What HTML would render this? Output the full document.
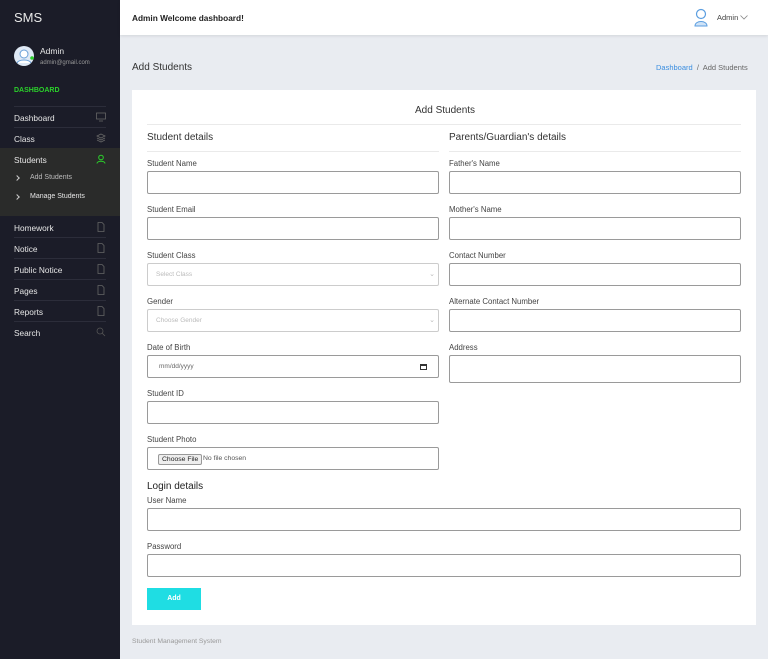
<!DOCTYPE html>
<html><head><meta charset="utf-8"><style>
*{margin:0;padding:0;box-sizing:border-box}
body{width:768px;height:659px;overflow:hidden;background:#e9ecf1;font-family:"Liberation Sans",sans-serif;position:relative;color:#333}
.a{position:absolute;white-space:nowrap}
#sb{position:absolute;left:0;top:0;width:120px;height:659px;background:#1b1c28}
.nav{position:absolute;left:14px;font-size:8.3px;color:#e6e6e6}
.ln{position:absolute;left:14px;width:92px;height:1px;background:#2c2d3a}
.ic{position:absolute;left:96px;width:10px;height:10px}
#hd{position:absolute;left:120px;top:0;width:648px;height:35px;background:#fff;box-shadow:0 1px 3px rgba(0,0,0,.1)}
#card{position:absolute;left:132px;top:90px;width:624px;height:535px;background:#fff}
.lb{position:absolute;font-size:7.8px;color:#444}
.in{position:absolute;width:292px;height:23px;border:1px solid #9a9a9a;border-radius:2px;background:#fff}
.ph{position:absolute;font-size:6.5px;color:#bbb;top:7px;left:8px}
.hr{position:absolute;height:1px;background:#eaeaea}
.ch{position:absolute;left:15px;width:4px;height:4px;border-right:1px solid #ccc;border-top:1px solid #ccc;transform:rotate(45deg)}
</style></head><body>
<div id="sb">
<div class="a" style="left:14px;top:10px;font-size:13px;color:#e8e8e8">SMS</div>
<svg class="a" style="left:14px;top:46px" width="21" height="21" viewBox="0 0 21 21"><circle cx="10" cy="10" r="10" fill="#dfe9f5"/><circle cx="10" cy="8" r="4" fill="#fff" stroke="#6aa0d8"/><path d="M3 17c2-4 12-4 14 0" fill="#fff" stroke="#6aa0d8"/><circle cx="18" cy="12" r="1.8" fill="#2bd12b"/></svg>
<div class="a" style="left:40px;top:46px;font-size:8.5px;color:#e6e6e6">Admin</div>
<div class="a" style="left:40px;top:60px;font-size:6px;color:#999">admin@gmail.com</div>
<div class="a" style="left:14px;top:87px;font-size:7px;font-weight:bold;color:#2bd12b">DASHBOARD</div>
<div class="ln" style="top:106px"></div><div class="ln" style="top:127px"></div>
<div class="ln" style="top:237px"></div><div class="ln" style="top:258px"></div><div class="ln" style="top:279px"></div><div class="ln" style="top:300px"></div><div class="ln" style="top:321px"></div>
<div class="a" style="left:0;top:148px;width:120px;height:68px;background:#2a2b2a"></div>
<div class="nav" style="top:113px">Dashboard</div>
<div class="nav" style="top:134px">Class</div>
<div class="nav" style="top:155px">Students</div>
<div class="ch" style="top:176px"></div><div class="nav" style="top:174px;left:30px;font-size:7px;color:#bbb">Add Students</div>
<div class="ch" style="top:195px"></div><div class="nav" style="top:193px;left:30px;font-size:7px">Manage Students</div>
<div class="nav" style="top:223px">Homework</div>
<div class="nav" style="top:244px">Notice</div>
<div class="nav" style="top:265px">Public Notice</div>
<div class="nav" style="top:286px">Pages</div>
<div class="nav" style="top:307px">Reports</div>
<div class="nav" style="top:328px">Search</div>
<svg class="ic" style="top:112px" viewBox="0 0 10 10"><rect x=".5" y="1" width="9" height="6" fill="none" stroke="#666" stroke-width=".8"/><path d="M3 9h4" stroke="#666" stroke-width=".8"/></svg>
<svg class="ic" style="top:133px" viewBox="0 0 10 10"><path d="M5 1 9 3 5 5 1 3zM1 5l4 2 4-2M1 7l4 2 4-2" fill="none" stroke="#666" stroke-width=".8"/></svg>
<svg class="ic" style="top:154px" viewBox="0 0 10 10"><circle cx="5" cy="3.5" r="2.3" fill="none" stroke="#2bd12b"/><path d="M1 9.5c0-3 8-3 8 0" fill="none" stroke="#2bd12b"/></svg>
<svg class="ic" style="top:222px" viewBox="0 0 10 10"><path d="M2 .5h4l2 2v7H2z" fill="none" stroke="#666" stroke-width=".8"/></svg>
<svg class="ic" style="top:243px" viewBox="0 0 10 10"><path d="M2 .5h4l2 2v7H2z" fill="none" stroke="#666" stroke-width=".8"/></svg>
<svg class="ic" style="top:264px" viewBox="0 0 10 10"><path d="M2 .5h4l2 2v7H2z" fill="none" stroke="#666" stroke-width=".8"/></svg>
<svg class="ic" style="top:285px" viewBox="0 0 10 10"><path d="M2 .5h4l2 2v7H2z" fill="none" stroke="#666" stroke-width=".8"/></svg>
<svg class="ic" style="top:306px" viewBox="0 0 10 10"><path d="M2 .5h4l2 2v7H2z" fill="none" stroke="#666" stroke-width=".8"/></svg>
<svg class="ic" style="top:327px" viewBox="0 0 10 10"><circle cx="4" cy="4" r="3" fill="none" stroke="#555" stroke-width=".8"/><path d="M6.2 6.2 9 9" stroke="#555" stroke-width=".8"/></svg>
</div>
<div id="hd">
<div class="a" style="left:12px;top:13px;font-size:8.3px;font-weight:bold;color:#222">Admin Welcome dashboard!</div>
<svg class="a" style="left:574px;top:8px" width="14" height="19" viewBox="0 0 14 19"><circle cx="7" cy="6" r="4.5" fill="#fff" stroke="#5b9ee0" stroke-width="1.2"/><path d="M1 18c0-6 12-6 12 0z" fill="#cfe3f7" stroke="#5b9ee0"/></svg>
<div class="a" style="left:597px;top:13px;font-size:7.5px;color:#444">Admin</div>
<svg class="a" style="left:620px;top:15px" width="8" height="5" viewBox="0 0 8 5"><path d="M.5.5 4 4 7.5.5" fill="none" stroke="#888" stroke-width=".8"/></svg>
</div>
<div class="a" style="left:132px;top:62px;font-size:10px;color:#333">Add Students</div>
<div class="a" style="left:656px;top:63px;font-size:7.5px;color:#3b8ee0">Dashboard <span style="color:#666">&nbsp;/&nbsp; Add Students</span></div>
<div id="card"></div>
<div class="a" style="left:415px;top:105px;font-size:10px;color:#333">Add Students</div>
<div class="hr" style="left:147px;top:124px;width:594px"></div>
<div class="a" style="left:147px;top:132px;font-size:10px;color:#333">Student details</div>
<div class="a" style="left:449px;top:132px;font-size:10px;color:#333">Parents/Guardian's details</div>
<div class="hr" style="left:147px;top:151px;width:292px"></div>
<div class="hr" style="left:449px;top:151px;width:292px"></div>

<div class="lb" style="left:147px;top:159px">Student Name</div><div class="in" style="left:147px;top:171px"></div>
<div class="lb" style="left:147px;top:205px">Student Email</div><div class="in" style="left:147px;top:217px"></div>
<div class="lb" style="left:147px;top:251px">Student Class</div><div class="in" style="left:147px;top:263px;border-color:#ccc"><span class="ph">Select Class</span><span class="a" style="right:3px;top:6px;font-size:7px;color:#bbb">⌄</span></div>
<div class="lb" style="left:147px;top:297px">Gender</div><div class="in" style="left:147px;top:309px;border-color:#ccc"><span class="ph">Choose Gender</span><span class="a" style="right:3px;top:6px;font-size:7px;color:#bbb">⌄</span></div>
<div class="lb" style="left:147px;top:343px">Date of Birth</div><div class="in" style="left:147px;top:355px"><span class="ph" style="color:#666;left:11px">mm/dd/yyyy</span><span class="a" style="right:11px;top:8px;width:7px;height:6px;border:1px solid #333;border-top-width:2px"></span></div>
<div class="lb" style="left:147px;top:389px">Student ID</div><div class="in" style="left:147px;top:401px"></div>
<div class="lb" style="left:147px;top:435px">Student Photo</div><div class="in" style="left:147px;top:447px"><span class="a" style="left:10px;top:6px;font-size:6.8px;color:#222;background:#eee;border:1px solid #999;border-radius:2px;padding:1px 3px">Choose File</span><span class="a" style="left:55px;top:7px;font-size:6.8px;color:#555">No file chosen</span></div>

<div class="lb" style="left:449px;top:159px">Father's Name</div><div class="in" style="left:449px;top:171px"></div>
<div class="lb" style="left:449px;top:205px">Mother's Name</div><div class="in" style="left:449px;top:217px"></div>
<div class="lb" style="left:449px;top:251px">Contact Number</div><div class="in" style="left:449px;top:263px"></div>
<div class="lb" style="left:449px;top:297px">Alternate Contact Number</div><div class="in" style="left:449px;top:309px"></div>
<div class="lb" style="left:449px;top:343px">Address</div><div class="in" style="left:449px;top:355px;height:28px"></div>

<div class="a" style="left:147px;top:481px;font-size:10px;color:#222">Login details</div>
<div class="lb" style="left:147px;top:496px">User Name</div><div class="in" style="left:147px;top:508px;width:594px"></div>
<div class="lb" style="left:147px;top:542px">Password</div><div class="in" style="left:147px;top:554px;width:594px"></div>
<div class="a" style="left:147px;top:588px;width:54px;height:22px;background:#1fdde3;color:#fff;font-size:7px;font-weight:bold;text-align:center;line-height:22px">Add</div>
<div class="a" style="left:132px;top:638px;font-size:6.8px;color:#999">Student Management System</div>
</body></html>
